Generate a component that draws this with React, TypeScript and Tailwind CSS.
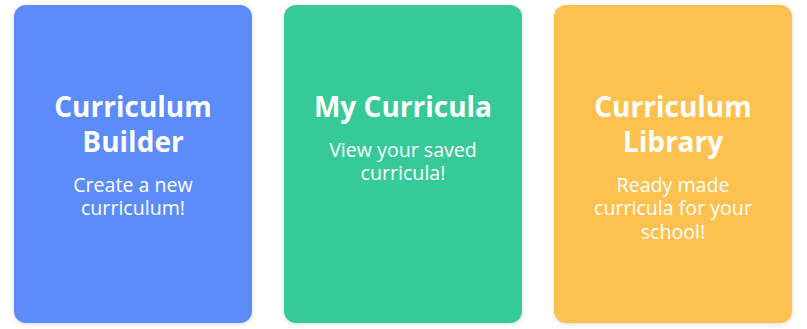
import React from "react";

const cards = [
  { title: "Curriculum Builder", sub: "Create a new curriculum!", bg: "bg-[#5b8cfa]" },
  { title: "My Curricula", sub: "View your saved curricula!", bg: "bg-[#36ca98]" },
  { title: "Curriculum Library", sub: "Ready made curricula for your school!", bg: "bg-[#fdc150]" },
];

export default function App() {
  return (
    <div className="w-[807px] h-[329px] bg-white flex gap-[32px] pl-[14px] pt-[5px] font-['Open_Sans',sans-serif]">
      {cards.map((c) => (
        <div
          key={c.title}
          className={`${c.bg} w-[238px] h-[318px] rounded-[12px] shadow-[0_1px_4px_rgba(0,0,0,0.15)] flex flex-col items-center pt-[84px] px-[24px] text-white text-center`}
        >
          <div className="text-[28px] leading-[35px] font-bold">{c.title}</div>
          <div className="mt-[14px] text-[19.6px] leading-[23.4px] px-[16px]">{c.sub}</div>
        </div>
      ))}
    </div>
  );
}
